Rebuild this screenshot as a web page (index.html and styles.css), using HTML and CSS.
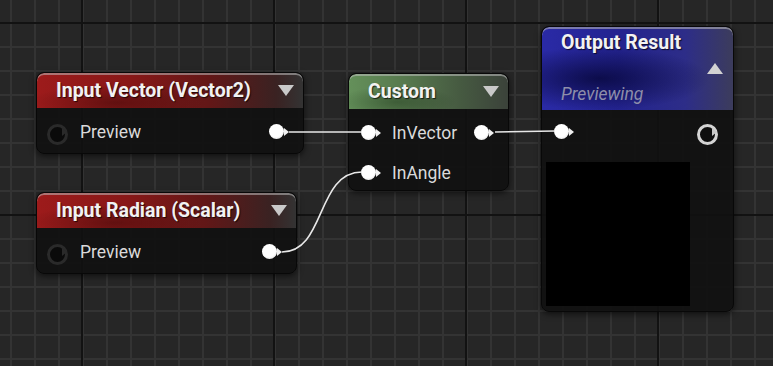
FILE: index.html
```html
<!DOCTYPE html>
<html lang="en">

<head>
    <meta charset="UTF-8">
    <meta name="viewport" content="width=device-width, initial-scale=1.0">
    <title>Material Graph</title>
    <link rel="stylesheet" href="styles.css">
</head>

<body>
    <div class="graph">
        <svg class="wires" width="773" height="366" viewBox="0 0 773 366">
            <path d="M289 132 L362 132" />
            <path d="M282 252 C326 252, 316 172, 362 172" />
            <path d="M495 132 L555 131" />
        </svg>

        <!-- Input Vector -->
        <div class="node node-vector">
            <div class="node-header header-red">
                <span class="title">Input Vector (Vector2)</span>
                <span class="caret caret-down"></span>
            </div>
            <div class="node-body">
                <div class="row">
                    <span class="pin pin-hollow"></span>
                    <span class="label">Preview</span>
                    <span class="pin pin-filled pin-right"></span>
                </div>
            </div>
        </div>

        <!-- Input Radian -->
        <div class="node node-radian">
            <div class="node-header header-red">
                <span class="title">Input Radian (Scalar)</span>
                <span class="caret caret-down"></span>
            </div>
            <div class="node-body">
                <div class="row">
                    <span class="pin pin-hollow"></span>
                    <span class="label">Preview</span>
                    <span class="pin pin-filled pin-right"></span>
                </div>
            </div>
        </div>

        <!-- Custom -->
        <div class="node node-custom">
            <div class="node-header header-green">
                <span class="title">Custom</span>
                <span class="caret caret-down"></span>
            </div>
            <div class="node-body">
                <div class="row">
                    <span class="pin pin-filled"></span>
                    <span class="label">InVector</span>
                    <span class="pin pin-filled pin-right"></span>
                </div>
                <div class="row">
                    <span class="pin pin-filled"></span>
                    <span class="label">InAngle</span>
                </div>
            </div>
        </div>

        <!-- Output Result -->
        <div class="node node-output">
            <div class="node-header header-blue">
                <span class="title">Output Result</span>
                <span class="caret caret-up"></span>
                <span class="subtitle">Previewing</span>
            </div>
            <div class="node-body">
                <div class="row">
                    <span class="pin pin-filled"></span>
                    <span class="pin pin-ring pin-right"></span>
                </div>
                <div class="preview"></div>
            </div>
        </div>
    </div>
</body>

</html>
```

FILE: styles.css
```css
* {
    box-sizing: border-box;
}

body {
    margin: 0;
    background-color: #252525;
    font-family: Roboto, "Liberation Sans", sans-serif;
}

.graph {
    position: relative;
    width: 773px;
    height: 366px;
    overflow: hidden;
    background-color: #262626;
    background-image:
        linear-gradient(to right, #121212 0, #121212 2px, transparent 2px),
        linear-gradient(to bottom, #121212 0, #121212 2px, transparent 2px),
        linear-gradient(to right, #333 0, #333 2px, transparent 2px),
        linear-gradient(to bottom, #333 0, #333 2px, transparent 2px);
    background-size: 192px 192px, 192px 192px, 24px 24px, 24px 24px;
    background-position: 81px 0, 0 22px, 10px 0, 0 22px;
}

.wires {
    position: absolute;
    top: 0;
    left: 0;
    z-index: 2;
    pointer-events: none;
}

.wires path {
    fill: none;
    stroke: #e8e8e8;
    stroke-width: 1.6;
}

/* nodes sit on the canvas at their own coordinates */
.node {
    position: absolute;
    z-index: 1;
    border: 1px solid #080808;
    border-radius: 8px;
    background-color: rgba(16, 17, 16, .91);
    box-shadow: 0 2px 6px rgba(0, 0, 0, .6);
    overflow: hidden;
}

.node-vector {
    left: 36px;
    top: 72px;
    width: 268px;
    height: 82px;
}

.node-radian {
    left: 36px;
    top: 192px;
    width: 261px;
    height: 82px;
}

.node-custom {
    left: 348px;
    top: 73px;
    width: 161px;
    height: 118px;
}

.node-output {
    left: 541px;
    top: 26px;
    width: 193px;
    height: 286px;
}

.node-header {
    display: flex;
    align-items: center;
    justify-content: space-between;
    height: 35px;
    padding: 0 9px 0 19px;
    border-radius: 7px 7px 0 0;
    box-shadow: inset 0 2px 0 rgba(190, 190, 190, .55);
}

.header-red {
    background:
        radial-gradient(ellipse 90px 18px at 30% 85%, rgba(20, 0, 0, .35), transparent),
        linear-gradient(to right, #9d1b1b 0%, #881818 35%, #621717 65%, #3a2222 90%, #333 100%);
}

.header-green {
    background:
        radial-gradient(ellipse 60px 16px at 30% 80%, rgba(0, 20, 0, .3), transparent),
        linear-gradient(to right, #64905a 0%, #57794e 35%, #465a41 70%, #3b423a 100%);
}

.header-blue {
    background:
        radial-gradient(ellipse 110px 32px at 30% 62%, rgba(4, 4, 50, .75), transparent),
        linear-gradient(to right, #2a2aa6 0%, #23238f 40%, #2d2d88 75%, #3c3c5c 100%);
}

.node-output .node-header {
    display: grid;
    grid-template-columns: 1fr auto;
    grid-template-rows: 30px 22px 30px;
    align-items: center;
    height: 83px;
    padding: 0 10px 1px 19px;
}

.node-output .title {
    grid-column: 1 / 3;
}

.node-output .caret {
    grid-column: 2;
    grid-row: 2;
}

.node-output .subtitle {
    grid-column: 1 / 3;
    grid-row: 3;
}

.title {
    color: #f2f2f2;
    font-size: 19.5px;
    font-weight: 700;
    white-space: nowrap;
    text-shadow: 1px 1px 1px rgba(0, 0, 0, .7);
}

.subtitle {
    color: #8e8eaa;
    font-size: 17.5px;
    font-style: italic;
}

.caret {
    width: 0;
    height: 0;
    border-left: 8px solid transparent;
    border-right: 8px solid transparent;
}

.caret-down {
    border-top: 11px solid #c9c9c9;
}

.caret-up {
    border-bottom: 11px solid #d2d2d2;
}

.node-body {
    padding: 4px 0 0;
}

.row {
    display: flex;
    align-items: center;
    height: 40px;
    padding: 0 13px 0 12px;
}

.label {
    margin-left: 10px;
    color: #dadada;
    font-size: 17.5px;
}

.node-vector .row,
.node-radian .row {
    padding-left: 10px;
}

.node-vector .label,
.node-radian .label {
    margin-left: 12px;
}

.pin {
    position: relative;
    flex: none;
    width: 21px;
    height: 16px;
}

.pin::before {
    content: '';
    position: absolute;
    top: 0;
    left: 0;
    width: 15px;
    height: 15px;
    border-radius: 50%;
}

.pin::after {
    content: '';
    position: absolute;
    top: 3.5px;
    left: 15px;
    border-top: 4px solid transparent;
    border-bottom: 4px solid transparent;
    border-left: 5px solid #f0f0f0;
}

.pin-filled::before {
    background: radial-gradient(circle at 45% 40%, #fff 55%, #cfcfcf 100%);
}

.pin-hollow::before {
    border: 3px solid #2a2a2a;
    background-color: #0a0a0a;
}

.pin-hollow::after {
    border-left-color: #2a2a2a;
}

.pin-ring::before {
    border: 3px solid #d4d4d4;
    background-color: #0e0e0e;
}

.pin-ring::after {
    border-left-color: #c8c8c8;
}

.pin-right {
    margin-left: auto;
}

.node-output .row {
    padding-right: 15px;
}

.node-output .node-body {
    padding: 2px 0 0;
}

.preview {
    width: 144px;
    height: 144px;
    margin: 10px 0 0 4px;
    background-color: #000;
}
```
